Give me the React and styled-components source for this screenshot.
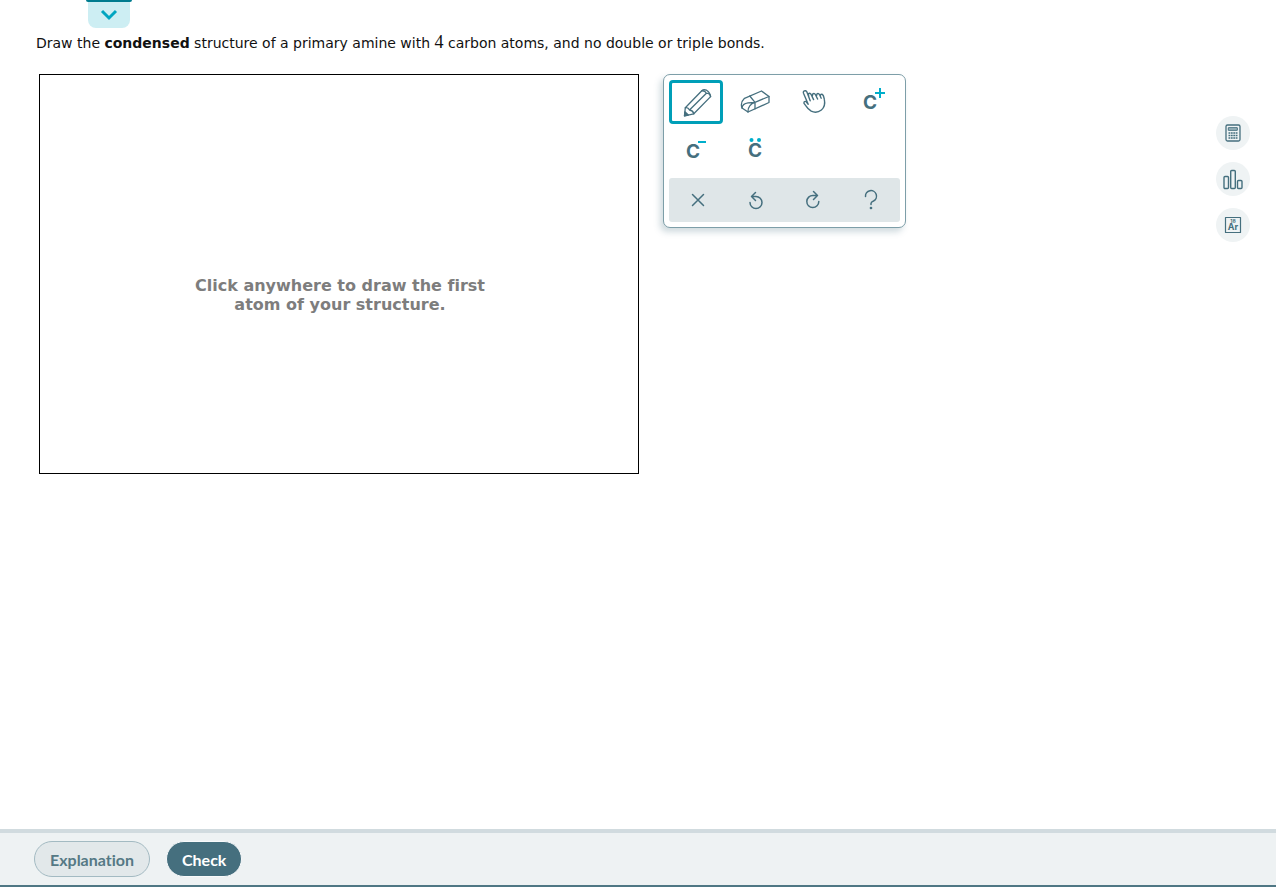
import React, { useState } from "react";
import styled, { createGlobalStyle } from "styled-components";

const GlobalStyle = createGlobalStyle`
:root{
  --color-slate: #456f7e;
  --color-teal: #009fb8;
  --color-bright: #00aecb;
  --font-text: "DejaVu Sans", Verdana, sans-serif;
  --font-ui: Lato, sans-serif;
}
*{
  box-sizing: border-box;
}
body{
  margin: 0;
  background-color: #fff;
  font-family: var(--font-text);
  font-variant-ligatures: none;
}
button{
  margin: 0;
  padding: 0;
  border: none;
  background: none;
  cursor: pointer;
}
svg{
  display: block;
}
`

const PageStyles = styled.div`
display: flex;
flex-direction: column;
min-height: 100vh;
`

const ContentStyles = styled.main`
flex: 1;
display: flex;
align-items: flex-start;
justify-content: space-between;
padding: 0 26px 24px 36px;
`

const ExpandButton = styled.button`
display: flex;
justify-content: center;
width: 44px;
height: 28px;
margin-left: 51px;
&::before{
  content: "";
  position: absolute;
  top: 0;
  width: 46px;
  height: 2px;
  border-radius: 0 0 2px 2px;
  background-color: #007c8f;
}
span{
  display: flex;
  align-items: center;
  justify-content: center;
  width: 42px;
  height: 28px;
  padding-top: 2px;
  border-radius: 0 0 8px 8px;
  background-color: #cdeef3;
}
`

const Prompt = styled.p`
margin: 5px 0 21px;
font-size: 14px;
line-height: 20px;
color: #111;
.number{
  font-family: "Liberation Serif", serif;
  font-size: 18px;
  line-height: 16px;
}
`

const Workspace = styled.div`
display: flex;
align-items: flex-start;
gap: 24px;
padding-left: 3px;
`

const Canvas = styled.section`
display: flex;
align-items: center;
justify-content: center;
width: 600px;
min-height: 400px;
padding-top: 42px;
border: 1px solid #000;
p{
  width: 320px;
  margin: 0 0 0 2px;
  font-size: 16px;
  font-weight: 700;
  line-height: 19px;
  text-align: center;
  color: #7d7d7d;
}
`

const Toolbox = styled.div`
width: 243px;
padding: 5px;
border: 1px solid #7d9ea8;
border-radius: 7px;
background-color: #fff;
box-shadow: -3px 4px 6px rgba(69, 111, 126, 0.25);
`

const ToolGrid = styled.div`
display: grid;
grid-template-columns: repeat(4, 54px);
grid-auto-rows: 44px;
gap: 4px 5px;
margin-bottom: 6px;
`

const ToolButton = styled.button`
display: flex;
align-items: center;
justify-content: center;
border: 3px solid ${(props) => props.$active ? "var(--color-teal)" : "transparent"};
border-radius: 4px;
color: var(--color-slate);
`

const ActionBar = styled.div`
display: grid;
grid-template-columns: repeat(4, 1fr);
height: 44px;
border-radius: 3px;
background-color: #dfe6e8;
`

const ActionButton = styled.button`
display: flex;
align-items: center;
justify-content: center;
color: var(--color-slate);
`

const SideTools = styled.aside`
display: flex;
flex-direction: column;
gap: 12px;
padding-top: 116px;
`

const SideButton = styled.button`
display: flex;
align-items: center;
justify-content: center;
width: 34px;
height: 34px;
border-radius: 50%;
background-color: #eff3f4;
color: var(--color-slate);
`

const Footer = styled.footer`
display: flex;
align-items: center;
gap: 16px;
height: 58px;
padding: 0 34px;
border-top: 4px solid #d1dbdf;
border-bottom: 2px solid #4f7784;
background-color: #eef2f3;
`

const FooterButton = styled.button`
height: 36px;
padding: 0 15px;
border: 1px solid ${(props) => props.$primary ? "#f8fafb" : "#a3bac2"};
border-radius: 18px;
background-color: ${(props) => props.$primary ? "var(--color-slate)" : "#e2e8ea"};
color: ${(props) => props.$primary ? "#fff" : "#557985"};
font-family: var(--font-ui);
font-size: 16px;
font-weight: 700;
font-variant-ligatures: none;
`

const CarbonText = styled.text`
font-family: Inter, sans-serif;
font-size: 19px;
font-weight: 700;
fill: currentColor;
text-anchor: middle;
`

const ElementText = styled.text`
font-family: Inter, sans-serif;
font-size: ${(props) => props.$small ? "5px" : "9px"};
font-weight: 700;
fill: currentColor;
text-anchor: middle;
`

const line = {
  fill: "none",
  stroke: "currentColor",
  strokeWidth: 1.5,
  strokeLinecap: "round",
  strokeLinejoin: "round",
}

const PencilIcon = () => (
  <svg width="34" height="34" viewBox="0 0 34 34" {...line} strokeWidth="1.3">
    <path d="M5.5 30.8 6.3 22.8 22.8 5.8Q24.5 4 27.5 5.2Q31.2 7.5 31.6 11.6L14.8 28.8Z" />
    <path d="M6.3 22.8Q9 22 10.5 25Q14 25.5 14.8 28.8M10.5 25 27.4 8.2M22.8 5.8Q26 5.5 27.4 8.2Q31 8.5 31.6 11.6" />
    <path d="m5.5 30.8.4-4 3.4 3.2Z" fill="currentColor" />
  </svg>
)

const EraserIcon = () => (
  <svg width="32" height="26" viewBox="0 0 32 26" {...line} strokeWidth="1.3">
    <path d="M5.5 9.3 22.5 2 30 7.5V13.5L9 23 3 19Q1 13.5 5.5 9.3Z" />
    <path d="M16 13.3 30 7.5M10.8 7 16 13.3V19.8M9 23Q8.8 15.5 16 13.3M3 19Q3.5 14.5 9 13.8L16 13.3" />
  </svg>
)

const HandIcon = () => (
  <svg width="26" height="28" viewBox="0 0 26 28" {...line} strokeWidth="1.4">
    <path d="M9.2 12.8 6 4.2Q4.6 1.8 2.7 3.3 2 4 2.5 5.3L7.2 16.2M7.8 9 7.4 5.8Q8.7 4.5 10 6.2L12.6 11.6M11.3 8.2 11.8 5.8Q13.5 4.8 14.5 6.8L16.6 11M15.5 7.8 16 5.8Q17.5 4.9 18.6 6.8L20.2 10.2M19.4 7.8Q19.6 5.6 21.4 6.4 22.6 7.3 23.3 11.2 24.8 18.5 20.4 22 15.6 25.7 10.2 23.2 7 21.2 5.3 18.4L3 15.3Q2.7 13.2 4.8 13.4L7.2 16.2" />
  </svg>
)

const CarbonIcon = ({ type }) => (
  <svg width="40" height="38" viewBox="0 0 40 38">
    <CarbonText x={type === "plus" ? 17 : type === "minus" ? 17 : 20} y={type === "minus" ? 27 : 26}>C</CarbonText>
    <g fill="none" stroke="#00aecb" strokeWidth="2">
      {type === "plus" && <path d="M27 5v10M22 10h10" />}
      {type === "minus" && <path d="M22 11h8" />}
    </g>
    {type === "pair" && (
      <g fill="#00aecb">
        <circle cx="16.5" cy="9" r="2" />
        <circle cx="24" cy="9" r="2" />
      </g>
    )}
  </svg>
)

const ClearIcon = () => (
  <svg width="20" height="20" viewBox="0 0 20 20" {...line}>
    <path d="m4.5 4.5 11 11m0-11-11 11" />
  </svg>
)

const UndoIcon = () => (
  <svg width="20" height="20" viewBox="0 0 20 20" {...line}>
    <path d="M4 12.5A6 6 0 1 0 10 6.5H5.5M9.5 2.5 5.5 6.5 9.5 10.5" />
  </svg>
)

const RedoIcon = () => (
  <svg width="20" height="20" viewBox="0 0 20 20" {...line}>
    <path d="M15.8 11.5A6 6 0 1 1 10 5.5H14.5M10.5 1.5 14.5 5.5 10.5 9.5" />
  </svg>
)

const HelpIcon = () => (
  <svg width="20" height="22" viewBox="0 0 20 22" {...line}>
    <path d="M4.5 7.5A5.5 5.5 0 1 1 12.5 12Q10 13 10 14.5v1" />
    <circle cx="10" cy="19" r="0.6" fill="currentColor" />
  </svg>
)

const CalculatorIcon = () => (
  <svg width="18" height="20" viewBox="0 0 18 20" {...line} strokeWidth="1.3">
    <rect x="2" y="2" width="14" height="16" rx="1.5" />
    <rect x="4.7" y="4.7" width="8.6" height="2.6" fill="#9fb8c0" strokeWidth="1" />
    <path d="M4.5 10h9M4.5 12.5h9M4.5 15h9" strokeWidth="1.6" strokeLinecap="butt" strokeDasharray="1.8 .6" />
  </svg>
)

const ChartIcon = () => (
  <svg width="22" height="22" viewBox="0 0 22 22" {...line} strokeWidth="1.4">
    <rect x="2" y="8.5" width="4.5" height="12" rx="1" />
    <rect x="8.7" y="2.5" width="4.6" height="18" rx="1" />
    <rect x="15.5" y="12.5" width="4.5" height="8" rx="1" />
  </svg>
)

const PeriodicIcon = () => (
  <svg width="18" height="18" viewBox="0 0 18 18">
    <rect x="1.5" y="1.5" width="15" height="15" {...line} strokeWidth="1.2" />
    <ElementText $small x="9" y="6.5">18</ElementText>
    <ElementText x="9" y="14">Ar</ElementText>
  </svg>
)

const tools = [
  { name: "Draw", icon: <PencilIcon /> },
  { name: "Erase", icon: <EraserIcon /> },
  { name: "Move", icon: <HandIcon /> },
  { name: "Positive charge", icon: <CarbonIcon type="plus" /> },
  { name: "Negative charge", icon: <CarbonIcon type="minus" /> },
  { name: "Lone pair", icon: <CarbonIcon type="pair" /> },
]

const actions = [
  { name: "Clear", icon: <ClearIcon /> },
  { name: "Undo", icon: <UndoIcon /> },
  { name: "Redo", icon: <RedoIcon /> },
  { name: "Help", icon: <HelpIcon /> },
]

const sideTools = [
  { name: "Calculator", icon: <CalculatorIcon /> },
  { name: "Data", icon: <ChartIcon /> },
  { name: "Periodic table", icon: <PeriodicIcon /> },
]

const App = () => {

  const [ activeTool, setActiveTool ] = useState("Draw")

  return(
    <PageStyles>
      <GlobalStyle />
      <ContentStyles>
        <div>
          <ExpandButton type="button" aria-label="Expand">
            <span>
              <svg width="18" height="12" viewBox="0 0 18 12" fill="none" stroke="#00a5c0" strokeWidth="3">
                <path d="m2 2 7 7 7-7" />
              </svg>
            </span>
          </ExpandButton>
          <Prompt>
            Draw the <b>condensed</b> structure of a primary amine with <span className="number">4</span> carbon atoms, and no double or triple bonds.
          </Prompt>
          <Workspace>
            <Canvas>
              <p>Click anywhere to draw the first atom of your structure.</p>
            </Canvas>
            <Toolbox>
              <ToolGrid>
                {tools.map((tool) => (
                  <ToolButton key={tool.name} type="button" aria-label={tool.name}
                    $active={activeTool === tool.name} onClick={() => setActiveTool(tool.name)}>
                    {tool.icon}
                  </ToolButton>
                ))}
              </ToolGrid>
              <ActionBar>
                {actions.map((action) => (
                  <ActionButton key={action.name} type="button" aria-label={action.name}>
                    {action.icon}
                  </ActionButton>
                ))}
              </ActionBar>
            </Toolbox>
          </Workspace>
        </div>
        <SideTools>
          {sideTools.map((tool) => (
            <SideButton key={tool.name} type="button" aria-label={tool.name}>
              {tool.icon}
            </SideButton>
          ))}
        </SideTools>
      </ContentStyles>
      <Footer>
        <FooterButton type="button">Explanation</FooterButton>
        <FooterButton type="button" $primary>Check</FooterButton>
      </Footer>
    </PageStyles>
  )
}

export default App;
